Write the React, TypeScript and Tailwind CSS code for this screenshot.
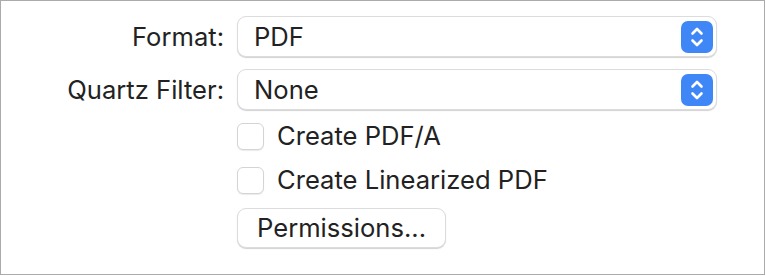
function PopUp({ value }: { value: string }) {
  return (
    <div className="relative flex h-[41px] w-[480px] items-center rounded-[9px] border border-[#dcdcdc] bg-white pl-4 shadow-[0_1px_1px_rgba(0,0,0,0.18)]">
      <span>{value}</span>
      <div className="absolute right-[3px] top-[4px] flex h-[32px] w-[32px] items-center justify-center rounded-[7px] bg-[#3f87f6]">
        <svg width="14" height="22" viewBox="0 0 14 22" fill="none" stroke="white" strokeWidth="2.6" strokeLinecap="round" strokeLinejoin="round">
          <path d="M2.5 7.5 L7 3 L11.5 7.5" />
          <path d="M2.5 14.5 L7 19 L11.5 14.5" />
        </svg>
      </div>
    </div>
  );
}

function Checkbox({ label }: { label: string }) {
  return (
    <label className="flex h-[44px] items-center gap-[13px]">
      <span className="h-[27px] w-[27px] rounded-[6px] border border-[#d4d4d4] bg-white shadow-[0_1px_1px_rgba(0,0,0,0.08)]" />
      <span>{label}</span>
    </label>
  );
}

export default function App() {
  return (
    <div
      className="h-[275px] w-[765px] border border-[#ababab] bg-white text-[25.6px] leading-none text-[#222]"
      style={{ fontFamily: 'Inter, "Liberation Sans", sans-serif' }}
    >
      <div className="grid grid-cols-[223px_480px] gap-x-[13px] pt-[15px]">
        <div className="flex h-[41px] items-center justify-end">Format:</div>
        <PopUp value="PDF" />

        <div className="mt-[12px] flex h-[41px] items-center justify-end">Quartz Filter:</div>
        <div className="mt-[12px]">
          <PopUp value="None" />
        </div>

        <div />
        <div className="mt-[4px] flex flex-col items-start">
          <Checkbox label="Create PDF/A" />
          <Checkbox label="Create Linearized PDF" />
          <button
            type="button"
            className="mt-[6px] h-[40px] rounded-[9px] border border-[#dcdcdc] bg-white px-[19px] shadow-[0_1px_1px_rgba(0,0,0,0.18)]"
          >
            Permissions...
          </button>
        </div>
      </div>
    </div>
  );
}
